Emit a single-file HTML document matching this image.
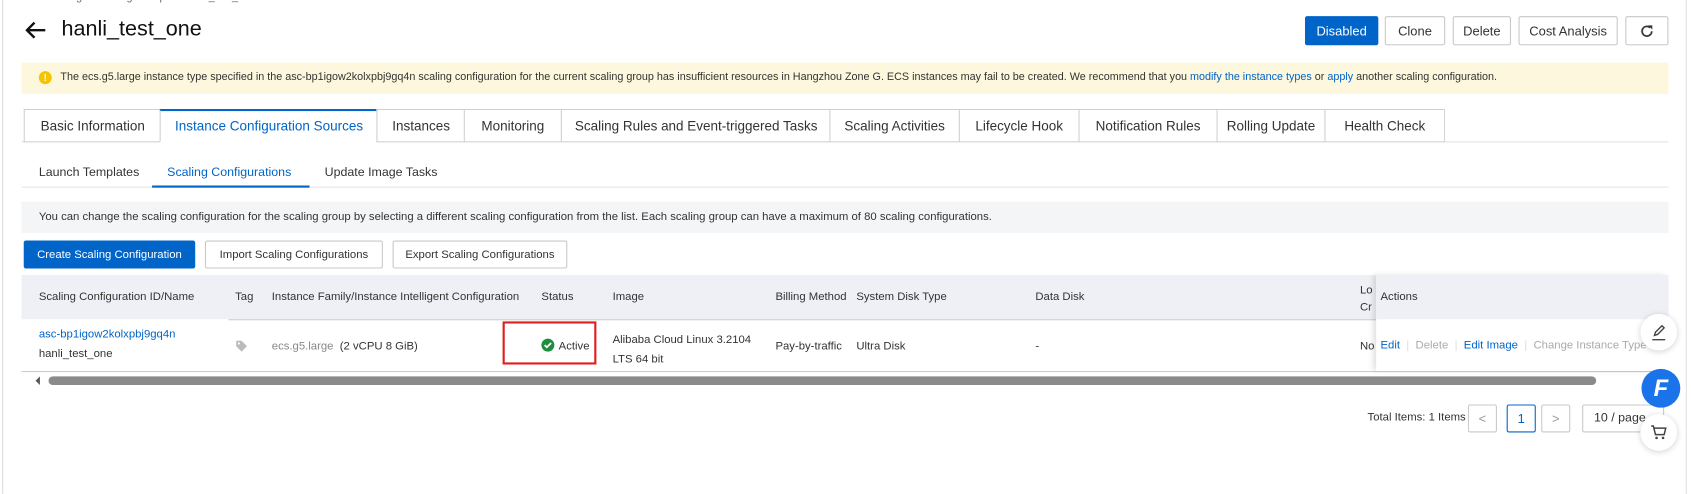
<!DOCTYPE html>
<html><head><meta charset="utf-8"><style>
*{box-sizing:border-box;margin:0;padding:0}
body{width:1691px;height:458px;overflow:hidden;background:#fff;font-family:"Liberation Sans",sans-serif;font-size:12px;color:#333;position:relative}
#w{position:absolute;left:0;top:0;width:1568px;height:425px;transform:scale(1.0785);transform-origin:0 0}
.a{position:absolute;white-space:nowrap}
.btn{position:absolute;border:1px solid #c8c8c8;background:#fff;display:flex;align-items:center;justify-content:center;font-size:12px;color:#333;border-radius:2px;white-space:nowrap}
.blue{background:#0064c8;border-color:#0064c8;color:#fff}
.tab{position:absolute;top:101px;height:31px;border:1px solid #d0d0d0;border-right:none;background:#fff;display:flex;align-items:center;justify-content:center;font-size:12.5px;color:#333;white-space:nowrap}
.lnk{color:#0064c8}
.circ{position:absolute;width:34px;height:34px;border-radius:50%;background:#fff;box-shadow:0 1px 6px rgba(0,0,0,.18);display:flex;align-items:center;justify-content:center}
.t{font-size:10.5px}
</style></head><body><div id="w">
<div class="a" style="left:2px;top:0;width:1px;height:458px;background:#ddd"></div>
<div class="a" style="left:1563px;top:0;width:1px;height:458px;background:#e4e4e4"></div>
<div class="a" style="left:20px;top:-8px;font-size:10px;color:#666">Auto Scaling &nbsp;/&nbsp; Scaling Groups &nbsp;/&nbsp; hanli_test_one</div>
<div class="a" style="left:1410px;top:-8px;font-size:10px;color:#333">Get Started &nbsp;&nbsp; Documentation</div>
<svg class="a" style="left:22px;top:19px" width="22" height="18" viewBox="0 0 22 18"><path d="M20 9H3M10 2L3 9l7 7" stroke="#111" stroke-width="2.2" fill="none"/></svg>
<div class="a" style="left:57px;top:16px;font-size:20px;color:#111">hanli_test_one</div>
<div class="btn blue" style="left:1210px;top:15px;width:68px;height:27px">Disabled</div>
<div class="btn" style="left:1284px;top:15px;width:56px;height:27px">Clone</div>
<div class="btn" style="left:1347px;top:15px;width:54px;height:27px">Delete</div>
<div class="btn" style="left:1408px;top:15px;width:92px;height:27px">Cost Analysis</div>
<div class="btn" style="left:1507px;top:15px;width:40px;height:27px"><svg width="14" height="14" viewBox="0 0 14 14"><path d="M11.5 7A4.5 4.5 0 1 1 10 3.6" stroke="#333" stroke-width="1.6" fill="none"/><path d="M8 1.5h4v4z" fill="#333"/></svg></div>
<div class="a" style="left:20px;top:58px;width:1527px;height:29px;background:#fdf8dd"></div>
<div class="a" style="left:36px;top:66px;width:12px;height:12px;border-radius:50%;background:#f5c400;color:#fff;font-size:9px;font-weight:bold;text-align:center;line-height:12px">!</div>
<div class="a" style="left:56px;top:66px;font-size:10px;color:#333">The ecs.g5.large instance type specified in the asc-bp1igow2kolxpbj9gq4n scaling configuration for the current scaling group has insufficient resources in Hangzhou Zone G. ECS instances may fail to be created. We recommend that you <span class="lnk">modify the instance types</span> or <span class="lnk">apply</span> another scaling configuration.</div>
<div class="a" style="left:20px;top:131px;width:1527px;height:1px;background:#ddd"></div>
<div class="tab" style="left:22px;width:127px">Basic Information</div>
<div class="tab" style="left:148px;width:202px;border-top:2px solid #0064c8;border-bottom:1px solid #fff;color:#0064c8">Instance Configuration Sources</div>
<div class="tab" style="left:349px;width:82px">Instances</div>
<div class="tab" style="left:430px;width:90px">Monitoring</div>
<div class="tab" style="left:520px;width:250px">Scaling Rules and Event-triggered Tasks</div>
<div class="tab" style="left:769px;width:120px">Scaling Activities</div>
<div class="tab" style="left:889px;width:111px">Lifecycle Hook</div>
<div class="tab" style="left:1000px;width:128px">Notification Rules</div>
<div class="tab" style="left:1128px;width:100px">Rolling Update</div>
<div class="tab" style="left:1228px;width:112px;border-right:1px solid #d0d0d0">Health Check</div>
<div class="a" style="left:36px;top:154px;font-size:11.5px">Launch Templates</div>
<div class="a" style="left:155px;top:154px;font-size:11.5px;color:#0064c8">Scaling Configurations</div>
<div class="a" style="left:301px;top:154px;font-size:11.5px">Update Image Tasks</div>
<div class="a" style="left:20px;top:173px;width:1527px;height:1px;background:#e4e4e4"></div>
<div class="a" style="left:141px;top:172px;width:146px;height:2px;background:#0064c8"></div>
<div class="a" style="left:20px;top:187px;width:1527px;height:29px;background:#f4f5f7"></div>
<div class="a" style="left:36px;top:195px;font-size:10.5px">You can change the scaling configuration for the scaling group by selecting a different scaling configuration from the list. Each scaling group can have a maximum of 80 scaling configurations.</div>
<div class="btn blue" style="left:22px;top:223px;width:159px;height:26px;font-size:10.5px">Create Scaling Configuration</div>
<div class="btn" style="left:190px;top:223px;width:165px;height:26px;font-size:10.5px">Import Scaling Configurations</div>
<div class="btn" style="left:364px;top:223px;width:162px;height:26px;font-size:10.5px">Export Scaling Configurations</div>
<div class="a" style="left:20px;top:255px;width:1527px;height:41px;background:#eef0f5"></div>
<div class="a" style="left:212px;top:296px;width:1064px;height:1px;background:#ccc"></div>
<div class="a" style="left:20px;top:344px;width:1520px;height:1px;background:#ccc"></div>
<div class="t">
<div class="a" style="left:36px;top:269px">Scaling Configuration ID/Name</div>
<div class="a" style="left:218px;top:269px">Tag</div>
<div class="a" style="left:252px;top:269px">Instance Family/Instance Intelligent Configuration</div>
<div class="a" style="left:502px;top:269px">Status</div>
<div class="a" style="left:568px;top:269px">Image</div>
<div class="a" style="left:719px;top:269px">Billing Method</div>
<div class="a" style="left:794px;top:269px">System Disk Type</div>
<div class="a" style="left:960px;top:269px">Data Disk</div>
<div class="a" style="left:1261px;top:261px;line-height:16px">Lo<br>Cr</div>
<div class="a" style="left:36px;top:304px;color:#0064c8">asc-bp1igow2kolxpbj9gq4n</div>
<div class="a" style="left:36px;top:322px">hanli_test_one</div>
<svg class="a" style="left:218px;top:315px" width="12" height="12" viewBox="0 0 12 12"><path d="M1 1h5l5 5-5 5-5-5z" fill="#bbb"/><circle cx="3.5" cy="3.5" r="1" fill="#fff"/></svg>
<div class="a" style="left:252px;top:315px;color:#888">ecs.g5.large <span style="color:#333">&nbsp;(2 vCPU 8 GiB)</span></div>
<div class="a" style="left:466px;top:298px;width:87px;height:40px;border:2px solid #e02020"></div>
<div class="a" style="left:502px;top:314px;width:12px;height:12px;border-radius:50%;background:#1e8e3e"></div>
<svg class="a" style="left:502px;top:314px" width="12" height="12"><path d="M3 6l2 2 4-4" stroke="#fff" stroke-width="1.6" fill="none"/></svg>
<div class="a" style="left:518px;top:315px">Active</div>
<div class="a" style="left:568px;top:306px;line-height:18px">Alibaba Cloud Linux 3.2104<br>LTS 64 bit</div>
<div class="a" style="left:719px;top:315px">Pay-by-traffic</div>
<div class="a" style="left:794px;top:315px">Ultra Disk</div>
<div class="a" style="left:960px;top:315px">-</div>
<div class="a" style="left:1261px;top:315px">No</div>
</div>
<div class="a" style="left:1276px;top:255px;width:271px;height:89px;background:#fff;box-shadow:-3px 0 5px rgba(0,0,0,.12)"></div>
<div class="a" style="left:1276px;top:255px;width:271px;height:41px;background:#eef0f5"></div>
<div class="a t" style="left:1280px;top:269px">Actions</div>
<div class="a t" style="left:1280px;top:314px"><span class="lnk">Edit</span> <span style="color:#ddd">&nbsp;|&nbsp;</span> <span style="color:#aaa">Delete</span> <span style="color:#ddd">&nbsp;|&nbsp;</span> <span class="lnk">Edit Image</span> <span style="color:#ddd">&nbsp;|&nbsp;</span> <span style="color:#aaa">Change Instance Type</span></div>
<div class="a" style="left:33px;top:349px;width:0;height:0;border-top:4px solid transparent;border-bottom:4px solid transparent;border-right:4px solid #555"></div>
<div class="a" style="left:45px;top:349px;width:1435px;height:8px;border-radius:4px;background:#8a8a8a"></div>
<div class="a t" style="left:1268px;top:381px">Total Items: 1 Items</div>
<div class="btn" style="left:1361px;top:375px;width:27px;height:26px;color:#999">&lt;</div>
<div class="btn" style="left:1397px;top:375px;width:27px;height:26px;border-color:#0064c8;color:#0064c8">1</div>
<div class="btn" style="left:1429px;top:375px;width:27px;height:26px;color:#999">&gt;</div>
<div class="btn" style="left:1467px;top:375px;width:76px;height:26px;justify-content:flex-start;padding-left:10px;font-size:11.5px">10 / page <span style="color:#999;margin-left:6px">⌵</span></div>
<div class="circ" style="left:1521px;top:291px"><svg width="16" height="16" viewBox="0 0 16 16"><path d="M4 11l1-3 6-6 2 2-6 6z M2 15h12" stroke="#444" stroke-width="1.3" fill="none"/></svg></div>
<div class="a" style="left:1522px;top:342px;width:36px;height:36px;border-radius:50%;background:#1a73e8;color:#fff;font-size:22px;font-weight:bold;font-style:italic;text-align:center;line-height:36px">F</div>
<div class="circ" style="left:1521px;top:384px"><svg width="16" height="16" viewBox="0 0 16 16"><path d="M1 2h2l2 8h8l1.5-6H4" stroke="#444" stroke-width="1.4" fill="none"/><circle cx="6" cy="13" r="1.2" fill="#444"/><circle cx="12" cy="13" r="1.2" fill="#444"/></svg></div>
</div></body></html>
